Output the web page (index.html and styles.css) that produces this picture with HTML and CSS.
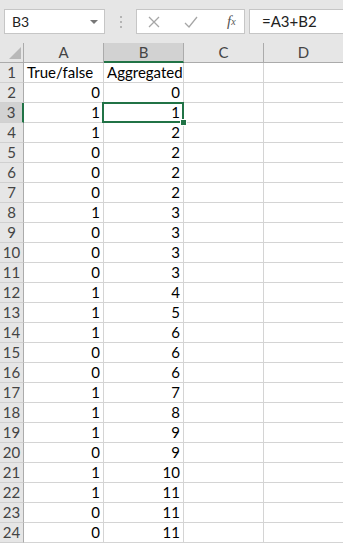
FILE: index.html
```html
<!DOCTYPE html>
<html lang="en">

<head>
    <meta charset="UTF-8">
    <meta name="viewport" content="width=device-width, initial-scale=1.0">
    <title>Sheet1</title>
    <link rel="stylesheet" href="styles.css">
</head>

<body>

    <div class="toolbar">
        <div class="name-box">
            <span>B3</span>
            <span class="arrow"></span>
        </div>
        <div class="dots">
            <span></span><span></span><span></span>
        </div>
        <div class="fx-buttons">
            <svg class="btn-icon" width="14" height="14" viewBox="0 0 14 14">
                <path d="M2 2 L12 12 M12 2 L2 12" stroke="#a6a6a6" stroke-width="1.3" fill="none" />
            </svg>
            <svg class="btn-icon" width="16" height="14" viewBox="0 0 16 14">
                <path d="M2 8 L6 12 L14 2" stroke="#a6a6a6" stroke-width="1.3" fill="none" />
            </svg>
            <span class="fx">f<sub>x</sub></span>
        </div>
        <div class="formula">=A3+B2</div>
    </div>

    <div class="sheet">
        <div class="corner"><span class="tri"></span></div>
        <div class="col-head">A</div>
        <div class="col-head selected">B</div>
        <div class="col-head">C</div>
        <div class="col-head">D</div>

        <div class="row-head">1</div>
        <div class="cell">True/false</div>
        <div class="cell">Aggregated</div>
        <div class="cell"></div>
        <div class="cell"></div>
    </div>

    <script>
        const a = [0, 1, 1, 0, 0, 0, 1, 0, 0, 0, 1, 1, 1, 0, 0, 1, 1, 1, 0, 1, 1, 0, 0];
        const sheet = document.querySelector('.sheet');

        let total = 0;
        a.forEach((value, i) => {
            const row = i + 2;
            total = row === 2 ? value : total + value;

            const head = document.createElement('div');
            head.className = 'row-head' + (row === 3 ? ' selected' : '');
            head.textContent = row;
            sheet.appendChild(head);

            [value, total, '', ''].forEach((v, col) => {
                const cell = document.createElement('div');
                cell.className = 'cell' + (v !== '' ? ' num' : '');
                if (row === 3 && col === 1) cell.classList.add('active');
                cell.textContent = v;
                sheet.appendChild(cell);
            });
        });
    </script>

</body>

</html>
```

FILE: styles.css
```css
body {
    margin: 0;
    font-family: Lato, "Liberation Sans", sans-serif;
    background-color: #fff;
    overflow: hidden;
}

.toolbar {
    display: flex;
    align-items: center;
    height: 43px;
    padding-left: 4px;
    background-color: #e6e6e6;
    box-sizing: border-box;
}

.name-box {
    display: flex;
    align-items: center;
    justify-content: space-between;
    width: 101px;
    height: 25px;
    padding: 0 6px 0 7px;
    box-sizing: border-box;
    background-color: #fff;
    border: 1px solid #c6c6c6;
    font-size: 14px;
    color: #222;
}

.arrow {
    width: 0;
    height: 0;
    border-left: 4px solid transparent;
    border-right: 4px solid transparent;
    border-top: 4px solid #777;
}

.dots {
    display: flex;
    flex-direction: column;
    gap: 3px;
    width: 2px;
    margin: 0 14px 0 15px;
}

.dots span {
    width: 2px;
    height: 2px;
    background-color: #b4b4b4;
}

.fx-buttons {
    display: flex;
    align-items: center;
    width: 109px;
    height: 25px;
    padding-left: 10px;
    box-sizing: border-box;
    background-color: #fff;
    border: 1px solid #c6c6c6;
}

.btn-icon {
    margin-right: 22px;
}

.fx-buttons .btn-icon + .btn-icon {
    margin-right: 28px;
}

.fx {
    font-family: "Liberation Serif", serif;
    font-style: italic;
    font-size: 15px;
    color: #555;
}

.fx sub {
    font-size: 10px;
    vertical-align: 1px;
}

.formula {
    flex: 1;
    height: 25px;
    margin-left: 4px;
    padding-left: 12px;
    box-sizing: border-box;
    background-color: #fff;
    border: 1px solid #c6c6c6;
    border-right: none;
    font-size: 15px;
    line-height: 23px;
    color: #222;
}

.sheet {
    display: grid;
    grid-template-columns: 24px 80px 80px 80px 80px;
    grid-auto-rows: 20px;
    font-size: 15px;
    color: #000;
}

.corner,
.col-head,
.row-head {
    background-color: #e6e6e6;
    color: #444;
    box-sizing: border-box;
}

.corner {
    position: relative;
    border-right: 1px solid #ababab;
    border-bottom: 1px solid #ababab;
}

.tri {
    position: absolute;
    right: 2px;
    bottom: 3px;
    width: 0;
    height: 0;
    border-left: 12px solid transparent;
    border-bottom: 12px solid #b8b8b8;
}

.col-head {
    text-align: center;
    line-height: 19px;
    border-right: 1px solid #ababab;
    border-bottom: 1px solid #ababab;
}

.col-head.selected {
    background-color: #d2d2d2;
    border-bottom: 2px solid #217346;
}

.row-head {
    text-align: center;
    line-height: 19px;
    border-right: 1px solid #ababab;
    border-bottom: 1px solid #d0d0d0;
}

.row-head.selected {
    background-color: #d2d2d2;
    border-right: 2px solid #217346;
}

.cell {
    padding: 0 3px;
    line-height: 19px;
    white-space: nowrap;
    box-sizing: border-box;
    border-right: 1px solid #d4d4d4;
    border-bottom: 1px solid #d4d4d4;
}

.num {
    text-align: right;
}

.active {
    position: relative;
}

.active::after {
    content: "";
    position: absolute;
    left: -2px;
    top: -1px;
    right: -1px;
    bottom: -1px;
    border: 2px solid #217346;
}

.active::before {
    content: "";
    position: absolute;
    right: -4px;
    bottom: -4px;
    width: 5px;
    height: 5px;
    background-color: #217346;
    border: 1px solid #fff;
    z-index: 1;
}
```
